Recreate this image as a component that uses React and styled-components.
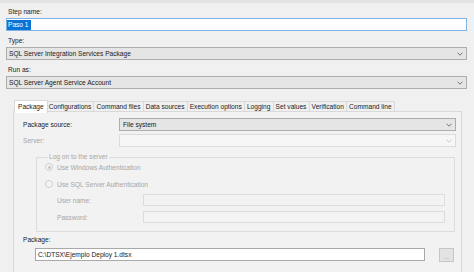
import React from 'react';
import styled, { createGlobalStyle } from 'styled-components';

const Global = createGlobalStyle`
  html, body { margin: 0; padding: 0; }
  body {
    width: 474px; height: 272px; overflow: hidden; background: #f0f0f0;
    font-family: "Liberation Sans", Arial, sans-serif; font-size: 6.6px; color: #1a1a1a;
  }
`;

const Window = styled.div`
  width: 474px; height: 272px; overflow: hidden; background: #f0f0f0;
  display: flex; flex-direction: column;
`;
const TopStrip = styled.div`height: 3px; flex: none; background: #e3e3e3;`;
const Content = styled.div`
  padding: 4px 7px 0 6px; display: flex; flex-direction: column;
`;
const Field = styled.div`display: flex; flex-direction: column; margin-bottom: 5px;`;
const Label = styled.div`
  height: 10px; line-height: 10px; padding-left: ${p => p.$indent ?? 2}px; margin-bottom: 1px;
  margin-top: ${p => p.$mt ?? 0}px;
  white-space: nowrap; color: ${p => (p.$disabled ? '#a6a6a6' : '#1a1a1a')};
`;
const TextBox = styled.div`
  height: 13px; box-sizing: border-box; border: 1px solid #7fb2e5; background: #fff;
  display: flex; align-items: center; padding-left: 0;
`;
const Selected = styled.span`
  background: #0a74d6; color: #fff; line-height: 10px; padding: 0 2px 0 1px;
`;
const Combo = styled.div`
  height: ${p => p.$h ?? 13}px; box-sizing: border-box; display: flex; align-items: center;
  justify-content: space-between; padding: 0 3px 0 ${p => p.$pl ?? 2}px;
  border: 1px solid ${p => (p.$disabled ? '#dcdcdc' : '#adadad')};
  background: ${p => (p.$disabled ? '#f6f6f6' : '#e5e5e5')};
  white-space: nowrap;
`;
const Chevron = ({ disabled }) => (
  <svg width="6" height="4" viewBox="0 0 6 4">
    <path d="M0.5 0.7 L3 3.2 L5.5 0.7" fill="none" stroke={disabled ? '#c4c4c4' : '#6a6a6a'} strokeWidth="0.9" />
  </svg>
);

const Tabs = styled.div`margin-top: 5px; margin-left: 7px; width: 449px; display: flex; flex-direction: column;`;
const TabStrip = styled.div`display: flex; align-items: flex-end; height: 13px; padding-left: 2px; position: relative; z-index: 1;`;
const Tab = styled.div`
  box-sizing: border-box; height: ${p => (p.$active ? 13 : 11)}px; line-height: ${p => (p.$active ? 11 : 10)}px;
  padding: 0 ${p => (p.$active ? 3 : 2.1)}px; margin-left: -1px;
  border: 1px solid #d9d9d9; border-bottom: ${p => (p.$active ? 'none' : '1px solid #d9d9d9')};
  background: ${p => (p.$active ? '#fff' : '#f0f0f0')}; white-space: nowrap; color: #1a1a1a;
  ${p => p.$active && 'margin-right: -1px; position: relative; z-index: 2; margin-bottom: -1px; height: 13px;'}
`;
const Panel = styled.div`
  border: 1px solid #d9d9d9; border-bottom: none; margin-top: -1px; background: #f2f2f2;
  padding: 6px 5px 0 9px; height: 170px; display: flex; flex-direction: column;
`;
const Grid = styled.div`
  display: grid; grid-template-columns: 96px 1fr; row-gap: 3px; align-items: center;
`;
const GridLabel = styled.div`
  line-height: 10px; white-space: nowrap; color: ${p => (p.$disabled ? '#a6a6a6' : '#1a1a1a')};
`;
const Group = styled.fieldset`
  margin: 5px 1px 0 13px; padding: 0 9px 8px 8px; border: 1px solid #dcdcdc;
  display: flex; flex-direction: column; min-width: 0;
`;
const Legend = styled.legend`
  padding: 0 1px; margin-left: 3px; line-height: 10px; color: #a6a6a6; white-space: nowrap;
`;
const RadioRow = styled.div`
  display: flex; align-items: center; height: 10px; margin-top: ${p => p.$mt ?? 0}px; color: #a6a6a6; white-space: nowrap;
`;
const Radio = styled.span`
  width: 8px; height: 8px; box-sizing: border-box; border-radius: 50%; border: 1px solid #cfcfcf;
  background: #f4f4f4; margin-right: 4px; display: flex; align-items: center; justify-content: center;
  &::after { content: ''; width: 3px; height: 3px; border-radius: 50%; background: ${p => (p.$checked ? '#c4c4c4' : 'transparent')}; }
`;
const CredRow = styled.div`
  display: grid; grid-template-columns: 86px 1fr; align-items: center; height: 12px;
  margin-top: ${p => p.$mt}px; padding-left: 12px; color: #a6a6a6; white-space: nowrap;
`;
const DisabledBox = styled.div`height: 12px; box-sizing: border-box; border: 1px solid #dcdcdc; background: #f3f3f3;`;
const PathRow = styled.div`display: flex; align-items: center; gap: 14px; padding-left: 12px; margin-top: 1px;`;
const PathBox = styled.div`
  flex: 1; height: 13px; box-sizing: border-box; border: 1px solid #a9a9a9; background: #fff;
  display: flex; align-items: center; padding-left: 2px; white-space: nowrap;
`;
const BrowseButton = styled.div`
  width: 15px; height: 14px; box-sizing: border-box; border: 1px solid #c6c6c6; background: #e3e3e3;
  margin-right: 2px; margin-top: 1px; display: flex; align-items: center; justify-content: center;
  font-size: 6px; line-height: 6px; color: #8a8a8a; padding-top: 3px; letter-spacing: -0.3px;
`;

export default function App() {
  return (
    <Window>
      <Global />
      <TopStrip />
      <Content>
        <Field>
          <Label>Step name:</Label>
          <TextBox><Selected>Paso 1</Selected></TextBox>
        </Field>
        <Field>
          <Label>Type:</Label>
          <Combo>SQL Server Integration Services Package<Chevron /></Combo>
        </Field>
        <Field>
          <Label>Run as:</Label>
          <Combo>SQL Server Agent Service Account<Chevron /></Combo>
        </Field>
        <Tabs>
          <TabStrip>
            <Tab $active>Package</Tab>
            <Tab>Configurations</Tab>
            <Tab>Command files</Tab>
            <Tab>Data sources</Tab>
            <Tab>Execution options</Tab>
            <Tab>Logging</Tab>
            <Tab>Set values</Tab>
            <Tab>Verification</Tab>
            <Tab>Command line</Tab>
          </TabStrip>
          <Panel>
            <Grid>
              <GridLabel>Package source:</GridLabel>
              <Combo $pl={3}>File system<Chevron /></Combo>
              <GridLabel $disabled>Server:</GridLabel>
              <Combo $disabled><span /><Chevron disabled /></Combo>
            </Grid>
            <Group>
              <Legend>Log on to the server</Legend>
              <RadioRow $mt={0}><Radio $checked />Use Windows Authentication</RadioRow>
              <RadioRow $mt={7}><Radio />Use SQL Server Authentication</RadioRow>
              <CredRow $mt={5}>User name:<DisabledBox /></CredRow>
              <CredRow $mt={5}>Password:<DisabledBox /></CredRow>
            </Group>
            <Label $indent={0} $mt={3}>Package:</Label>
            <PathRow>
              <PathBox>C:\DTSX\Ejemplo Deploy 1.dtsx</PathBox>
              <BrowseButton>...</BrowseButton>
            </PathRow>
          </Panel>
        </Tabs>
      </Content>
    </Window>
  );
}
